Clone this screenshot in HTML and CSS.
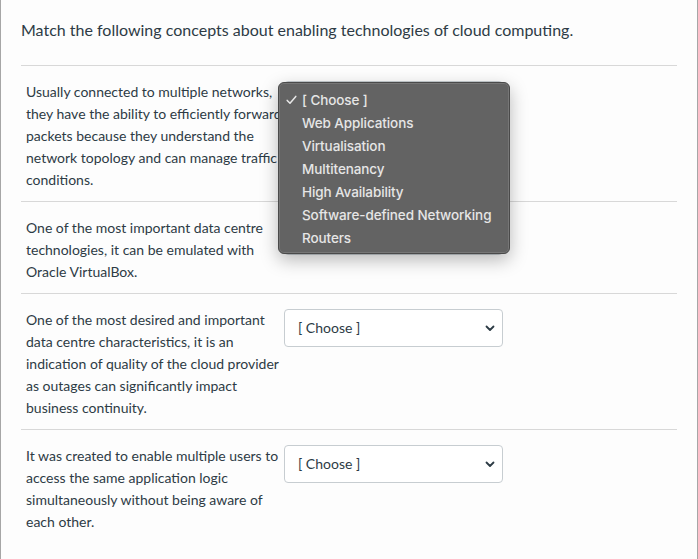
FILE: index.html
```html
<!DOCTYPE html>
<html>
<head>
<meta charset="utf-8">
<link rel="stylesheet" href="styles.css">
</head>
<body>
<div class="quiz">
  <div class="prompt">Match the following concepts about enabling technologies of cloud computing.</div>
  <div class="answers">
    <div class="answer">
      <div class="question">Usually connected to multiple networks, they have the ability to efficiently forward packets because they understand the network topology and can manage traffic conditions.</div>
      <div class="pick">
        <select class="choice"><option>[ Choose ]</option></select>
        <svg class="chev" width="10" height="7" viewBox="0 0 10 7"><path d="M1.5 1.5 L5 5 L8.5 1.5" fill="none" stroke="#2d3b45" stroke-width="1.8" stroke-linecap="round" stroke-linejoin="round"/></svg>
      </div>
    </div>
    <div class="answer">
      <div class="question">One of the most important data centre technologies, it can be emulated with Oracle VirtualBox.</div>
      <div class="pick">
        <select class="choice"><option>[ Choose ]</option></select>
        <svg class="chev" width="10" height="7" viewBox="0 0 10 7"><path d="M1.5 1.5 L5 5 L8.5 1.5" fill="none" stroke="#2d3b45" stroke-width="1.8" stroke-linecap="round" stroke-linejoin="round"/></svg>
      </div>
    </div>
    <div class="answer">
      <div class="question">One of the most desired and important data centre characteristics, it is an indication of quality of the cloud provider as outages can significantly impact business continuity.</div>
      <div class="pick">
        <select class="choice"><option>[ Choose ]</option></select>
        <svg class="chev" width="10" height="7" viewBox="0 0 10 7"><path d="M1.5 1.5 L5 5 L8.5 1.5" fill="none" stroke="#2d3b45" stroke-width="1.8" stroke-linecap="round" stroke-linejoin="round"/></svg>
      </div>
    </div>
    <div class="answer">
      <div class="question">It was created to enable multiple users to access the same application logic simultaneously without being aware of each other.</div>
      <div class="pick">
        <select class="choice"><option>[ Choose ]</option></select>
        <svg class="chev" width="10" height="7" viewBox="0 0 10 7"><path d="M1.5 1.5 L5 5 L8.5 1.5" fill="none" stroke="#2d3b45" stroke-width="1.8" stroke-linecap="round" stroke-linejoin="round"/></svg>
      </div>
    </div>
  </div>
  <ul class="menu">
    <li class="item selected"><svg class="check" width="11" height="10" viewBox="0 0 11 10"><path d="M1.2 5.4 L4 8.3 L9.8 1.4" fill="none" stroke="#e8e8e8" stroke-width="1.5" stroke-linecap="round" stroke-linejoin="round"/></svg>[ Choose ]</li>
    <li class="item">Web Applications</li>
    <li class="item">Virtualisation</li>
    <li class="item">Multitenancy</li>
    <li class="item">High Availability</li>
    <li class="item">Software-defined Networking</li>
    <li class="item">Routers</li>
  </ul>
</div>
</body>
</html>
```
FILE: styles.css
```css
html, body {
  margin: 0;
  padding: 0;
  background: #ffffff;
}
.quiz {
  position: relative;
  box-sizing: border-box;
  width: 698px;
  min-height: 559px;
  border-left: 1px solid #a6a6a6;
  border-right: 1px solid #a6a6a6;
  padding: 0 20px;
  font-family: Lato, "Liberation Sans", sans-serif;
  color: #2d3b45;
  background: #fdfdfd;
}
.prompt {
  font-size: 16px;
  line-height: 24px;
  padding: 18px 0 23px;
}
.answer {
  display: flex;
  align-items: flex-start;
  border-top: 1px solid #d8d8d8;
  padding: 15px 0 10px 5px;
}
.question {
  width: 258px;
  flex: none;
  font-size: 14px;
  line-height: 22px;
}
.pick {
  position: relative;
  width: 219px;
}
.choice {
  -webkit-appearance: none;
  appearance: none;
  box-sizing: border-box;
  width: 219px;
  height: 38px;
  margin: 0;
  padding: 0 13px 2px;
  border: 1px solid #c7cdd1;
  border-radius: 4px;
  background: #ffffff;
  font-family: Lato, "Liberation Sans", sans-serif;
  font-size: 14px;
  color: #2d3b45;
}
.chev {
  position: absolute;
  right: 8px;
  top: 16px;
  pointer-events: none;
}
.menu {
  position: absolute;
  left: 277px;
  top: 82px;
  box-sizing: border-box;
  width: 232px;
  height: 172px;
  margin: 0;
  padding: 5px 0 6px;
  list-style: none;
  background: #636363;
  border: 1px solid #4a4a4a;
  border-radius: 6px;
  box-shadow: 0 0 0 1px rgba(255,255,255,0.12) inset, 0 6px 18px rgba(0,0,0,0.28);
}
.item {
  display: flex;
  align-items: center;
  height: 23px;
  padding-left: 23px;
  font-family: Inter, "Liberation Sans", sans-serif;
  font-size: 13.5px;
  font-weight: 500;
  letter-spacing: -0.1px;
  color: #e6e6e6;
  white-space: nowrap;
}
.item.selected {
  padding-left: 7px;
}
.check {
  margin-right: 5px;
}
```
